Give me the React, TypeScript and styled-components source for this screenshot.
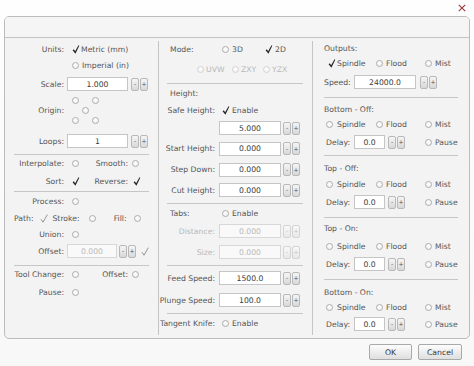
import React from "react";
import styled, { createGlobalStyle } from "styled-components";

const Global = createGlobalStyle`
  html, body { margin: 0; padding: 0; }
  body {
    width: 474px; height: 366px; overflow: hidden;
    background: #fafafa;
    font-family: "DejaVu Sans", Verdana, sans-serif;
    font-size: 7.7px;
    color: #555555;
  }
  * { box-sizing: border-box; }
`;

const Window = styled.div`
  width: 474px;
  height: 366px;
  display: flex;
  flex-direction: column;
  background: linear-gradient(#fefefe, #f8f8f8);
`;

const TopBar = styled.div`
  height: 16px;
  flex-shrink: 0;
  display: flex;
  justify-content: flex-end;
  align-items: flex-start;
  padding: 4px 8px 0 0;
`;

const CloseButton = styled.button`
  width: 8px;
  height: 8px;
  padding: 0;
  border: 0;
  background: none;
  display: flex;
  cursor: pointer;
`;

const Panel = styled.div`
  margin: 0 4px;
  height: 323px;
  flex-shrink: 0;
  border: 1px solid #bcbcbc;
  border-radius: 5px;
  background: #f3f3f3;
  display: flex;
  flex-direction: column;
  overflow: hidden;
`;

const PanelHeader = styled.div`
  height: 21px;
  flex-shrink: 0;
  border-bottom: 1px solid #c4c4c4;
  background: #f5f5f5;
`;

const Columns = styled.div`
  flex: 1;
  display: grid;
  grid-template-columns: 154px 154px 1fr;
  padding: 3px 0;
`;

const Col = styled.div<{ $divider?: boolean }>`
  display: flex;
  flex-direction: column;
  border-right: ${(p) => (p.$divider ? "1px solid #c4c4c4" : "0")};
  min-width: 0;
`;

const Row = styled.div<{ $h: number; $mt?: number; $pl?: number; $dim?: boolean }>`
  display: flex;
  align-items: center;
  flex-shrink: 0;
  height: ${(p) => p.$h}px;
  margin-top: ${(p) => p.$mt ?? 0}px;
  padding-left: ${(p) => p.$pl ?? 0}px;
  white-space: nowrap;
  color: ${(p) => (p.$dim ? "#b8b8b8" : "inherit")};
`;

const Label = styled.div<{ $w: number; $left?: boolean; $pl?: number }>`
  display: flex;
  justify-content: ${(p) => (p.$left ? "flex-start" : "flex-end")};
  width: ${(p) => p.$w}px;
  padding-left: ${(p) => p.$pl ?? 0}px;
  flex-shrink: 0;
  white-space: nowrap;
`;

const Text = styled.span<{ $ml?: number }>`
  margin-left: ${(p) => p.$ml ?? 0}px;
`;

const Divider = styled.div<{ $mt?: number; $ml: number; $mr: number }>`
  height: 1px;
  flex-shrink: 0;
  background: #c6c6c6;
  margin: ${(p) => p.$mt ?? 0}px ${(p) => p.$mr}px 0 ${(p) => p.$ml}px;
`;

const RadioDot = styled.span<{ $ml?: number; $dim?: boolean }>`
  display: inline-block;
  width: 7px;
  height: 7px;
  flex-shrink: 0;
  border-radius: 50%;
  border: 1px solid ${(p) => (p.$dim ? "#d4d4d4" : "#adadad")};
  background: radial-gradient(circle at 50% 35%, #ffffff, #eeeeee);
  margin-left: ${(p) => p.$ml ?? 0}px;
`;

const Option = styled.div<{ $w?: number; $ml?: number }>`
  display: flex;
  align-items: center;
  flex-shrink: 0;
  width: ${(p) => (p.$w ? `${p.$w}px` : "auto")};
  margin-left: ${(p) => p.$ml ?? 0}px;
`;

const Field = styled.input<{ $w: number; $ml?: number }>`
  width: ${(p) => p.$w}px;
  height: 14px;
  flex-shrink: 0;
  margin: 0 0 0 ${(p) => p.$ml ?? 0}px;
  padding: 0;
  border: 1px solid #c5c5c5;
  background: #ffffff;
  font: inherit;
  color: #3a3a3a;
  text-align: center;
  outline: none;
  &:disabled {
    color: #b8b8b8;
    background: #f9f9f9;
    border-color: #d8d8d8;
  }
`;

const SpinGroup = styled.div<{ $ml?: number }>`
  display: flex;
  gap: 1px;
  flex-shrink: 0;
  margin-left: ${(p) => p.$ml ?? 0}px;
`;

const SpinButton = styled.button`
  width: 8px;
  height: 13px;
  padding: 0;
  border: 1px solid #b8b8b8;
  border-radius: 2px;
  background: linear-gradient(#f5f5f5, #d8d8d8);
  font-family: "DejaVu Sans", sans-serif;
  font-size: 6px;
  line-height: 1;
  color: #555555;
  display: flex;
  align-items: center;
  justify-content: center;
  &:disabled {
    color: #c4c4c4;
    border-color: #d4d4d4;
    background: linear-gradient(#f8f8f8, #e8e8e8);
  }
`;

const OriginGrid = styled.div<{ $ml: number }>`
  display: grid;
  grid-template-columns: 10px 10px 10px;
  grid-template-rows: 10px 10px 10px;
  align-items: center;
  margin-left: ${(p) => p.$ml}px;
`;

const Footer = styled.div`
  flex: 1;
  display: flex;
  justify-content: flex-end;
  align-items: flex-start;
  gap: 6px;
  padding: 5px 12px 0 0;
`;

const DialogButton = styled.button<{ $w: number }>`
  width: ${(p) => p.$w}px;
  height: 16px;
  padding: 0;
  border: 1px solid #a9a9a9;
  border-radius: 2px;
  background: linear-gradient(#fdfdfd, #dfdfdf);
  font-family: "DejaVu Sans", Verdana, sans-serif;
  font-size: 7.7px;
  color: #333333;
`;

const Check = ({ ml = 0, thin = false }: { ml?: number; thin?: boolean }) => (
  <svg width="8" height="9" viewBox="0 0 8 9" style={{ marginLeft: ml, flexShrink: 0 }}>
    {thin ? (
      <polyline points="1,5.2 3,8.2 7.4,0.6" fill="none" stroke="#8a8a8a" strokeWidth="0.9" />
    ) : (
      <path d="M0.6,5.3 L1.9,4.3 L3.1,6.2 L6.5,0.2 L7.3,0.7 L3.4,8.7 Z" fill="#262626" />
    )}
  </svg>
);

const Spin = ({ ml = 0, disabled = false }: { ml?: number; disabled?: boolean }) => (
  <SpinGroup $ml={ml}>
    <SpinButton disabled={disabled}>-</SpinButton>
    <SpinButton disabled={disabled}>+</SpinButton>
  </SpinGroup>
);

const MidField = ({ label, value, h, disabled = false }: { label: string; value: string; h: number; disabled?: boolean }) => (
  <Row $h={h} $dim={disabled}>
    <Label $w={56}>{label}</Label>
    <Field $w={62} $ml={4} readOnly disabled={disabled} value={value} />
    <Spin ml={2} disabled={disabled} />
  </Row>
);

const OutputRadios = ({ h }: { h: number }) => (
  <Row $h={h} $pl={13}>
    <Option $w={50}>
      <RadioDot />
      <Text $ml={4}>Spindle</Text>
    </Option>
    <Option $w={49}>
      <RadioDot />
      <Text $ml={3}>Flood</Text>
    </Option>
    <Option>
      <RadioDot />
      <Text $ml={3}>Mist</Text>
    </Option>
  </Row>
);

const DelayRow = ({ h }: { h: number }) => (
  <Row $h={h}>
    <Label $w={41} $left $pl={13}>Delay:</Label>
    <Field $w={31} readOnly value="0.0" />
    <Spin ml={3} />
    <Option $ml={20}>
      <RadioDot />
      <Text $ml={3}>Pause</Text>
    </Option>
  </Row>
);

const Title = ({ children, mt = 0, h = 16 }: { children: React.ReactNode; mt?: number; h?: number }) => (
  <Row $h={h} $mt={mt} $pl={11}>
    {children}
  </Row>
);

export default function App() {
  return (
    <Window>
      <Global />
      <TopBar>
        <CloseButton aria-label="Close">
          <svg width="8" height="8" viewBox="0 0 8 8">
            <path d="M0.8,0.8 L7.2,7.2 M7.2,0.8 L0.8,7.2" stroke="#a03a3a" strokeWidth="1.2" />
          </svg>
        </CloseButton>
      </TopBar>
      <Panel>
        <PanelHeader />
        <Columns>
          <Col $divider>
            <Row $h={16}>
              <Label $w={59}>Units:</Label>
              <Check ml={8} />
              <Text $ml={1}>Metric (mm)</Text>
            </Row>
            <Row $h={16}>
              <Label $w={59} />
              <RadioDot $ml={8} />
              <Text $ml={3}>Imperial (in)</Text>
            </Row>
            <Row $h={22}>
              <Label $w={59}>Scale:</Label>
              <Field $w={61} $ml={3} readOnly value="1.000" />
              <Spin ml={3} />
            </Row>
            <Row $h={30}>
              <Label $w={59}>Origin:</Label>
              <OriginGrid $ml={8}>
                <RadioDot style={{ gridColumn: 1, gridRow: 1 }} />
                <RadioDot style={{ gridColumn: 3, gridRow: 1 }} />
                <RadioDot style={{ gridColumn: 2, gridRow: 2 }} />
                <RadioDot style={{ gridColumn: 1, gridRow: 3 }} />
                <RadioDot style={{ gridColumn: 3, gridRow: 3 }} />
              </OriginGrid>
            </Row>
            <Row $h={18} $mt={7}>
              <Label $w={59}>Loops:</Label>
              <Field $w={61} $ml={3} readOnly value="1" />
              <Spin ml={3} />
            </Row>
            <Divider $mt={4} $ml={9} $mr={9} />
            <Row $h={16}>
              <Label $w={59}>Interpolate:</Label>
              <RadioDot $ml={8} />
              <Label $w={49}>Smooth:</Label>
              <RadioDot $ml={4} />
            </Row>
            <Row $h={20}>
              <Label $w={59}>Sort:</Label>
              <Check ml={8} />
              <Label $w={48}>Reverse:</Label>
              <Check ml={5} />
            </Row>
            <Divider $ml={9} $mr={9} />
            <Row $h={18}>
              <Label $w={59}>Process:</Label>
              <RadioDot $ml={8} />
            </Row>
            <Row $h={16} $pl={9}>
              <Text>Path:</Text>
              <Check ml={7} thin />
              <Text $ml={4}>Stroke:</Text>
              <RadioDot $ml={9} />
              <Label $w={31}>Fill:</Label>
              <RadioDot $ml={7} />
            </Row>
            <Row $h={16}>
              <Label $w={59}>Union:</Label>
              <RadioDot $ml={8} />
            </Row>
            <Row $h={18}>
              <Label $w={59}>Offset:</Label>
              <Field $w={50} $ml={3} readOnly disabled value="0.000" />
              <Spin ml={2} />
              <Check ml={5} thin />
            </Row>
            <Divider $mt={5} $ml={9} $mr={9} />
            <Row $h={16}>
              <Label $w={59}>Tool Change:</Label>
              <RadioDot $ml={8} />
              <Label $w={49}>Offset:</Label>
              <RadioDot $ml={4} />
            </Row>
            <Row $h={20}>
              <Label $w={59}>Pause:</Label>
              <RadioDot $ml={8} />
            </Row>
          </Col>

          <Col $divider>
            <Row $h={16}>
              <Label $w={63} $left $pl={11}>Mode:</Label>
              <Option $w={43}>
                <RadioDot />
                <Text $ml={3}>3D</Text>
              </Option>
              <Option>
                <Check />
                <Text $ml={2}>2D</Text>
              </Option>
            </Row>
            <Row $h={24} $pl={38} $dim>
              <Option $w={35}>
                <RadioDot $dim />
                <Text $ml={2}>UVW</Text>
              </Option>
              <Option $w={31}>
                <RadioDot $dim />
                <Text $ml={2}>ZXY</Text>
              </Option>
              <Option>
                <RadioDot $dim />
                <Text $ml={2}>YZX</Text>
              </Option>
            </Row>
            <Divider $mt={2} $ml={8} $mr={9} />
            <Row $h={18}>
              <Label $w={56} $left $pl={11}>Height:</Label>
            </Row>
            <Row $h={16}>
              <Label $w={56}>Safe Height:</Label>
              <Check ml={7} />
              <Text $ml={2}>Enable</Text>
            </Row>
            <MidField label="" value="5.000" h={20} />
            <MidField label="Start Height:" value="0.000" h={21} />
            <MidField label="Step Down:" value="0.000" h={21} />
            <MidField label="Cut Height:" value="0.000" h={20} />
            <Divider $mt={3} $ml={8} $mr={9} />
            <Row $h={18}>
              <Label $w={63} $left $pl={11}>Tabs:</Label>
              <RadioDot />
              <Text $ml={3}>Enable</Text>
            </Row>
            <MidField label="Distance:" value="0.000" h={18} disabled />
            <MidField label="Size:" value="0.000" h={24} disabled />
            <Divider $mt={1} $ml={8} $mr={9} />
            <MidField label="Feed Speed:" value="1500.0" h={24} />
            <MidField label="Plunge Speed:" value="100.0" h={20} />
            <Divider $mt={3} $ml={8} $mr={9} />
            <Row $h={18}>
              <Label $w={56}>Tangent Knife:</Label>
              <RadioDot $ml={7} />
              <Text $ml={3}>Enable</Text>
            </Row>
          </Col>

          <Col>
            <Title h={14}>Outputs:</Title>
            <Row $h={16} $pl={15}>
              <Option $w={48}>
                <Check />
                <Text $ml={1}>Spindle</Text>
              </Option>
              <Option $w={49}>
                <RadioDot />
                <Text $ml={3}>Flood</Text>
              </Option>
              <Option>
                <RadioDot />
                <Text $ml={3}>Mist</Text>
              </Option>
            </Row>
            <Row $h={22}>
              <Label $w={41} $left $pl={11}>Speed:</Label>
              <Field $w={62} readOnly value="24000.0" />
              <Spin ml={4} />
            </Row>
            <Divider $mt={4} $ml={11} $mr={11} />
            <Title mt={3}>Bottom - Off:</Title>
            <OutputRadios h={14} />
            <DelayRow h={22} />
            <Divider $mt={2} $ml={11} $mr={11} />
            <Title mt={4}>Top - Off:</Title>
            <OutputRadios h={16} />
            <DelayRow h={20} />
            <Divider $mt={5} $ml={11} $mr={11} />
            <Title mt={2}>Top - On:</Title>
            <OutputRadios h={20} />
            <DelayRow h={16} />
            <Divider $mt={7} $ml={11} $mr={11} />
            <Title mt={4}>Bottom - On:</Title>
            <OutputRadios h={14} />
            <DelayRow h={20} />
          </Col>
        </Columns>
      </Panel>
      <Footer>
        <DialogButton $w={43}>OK</DialogButton>
        <DialogButton $w={44}>Cancel</DialogButton>
      </Footer>
    </Window>
  );
}
